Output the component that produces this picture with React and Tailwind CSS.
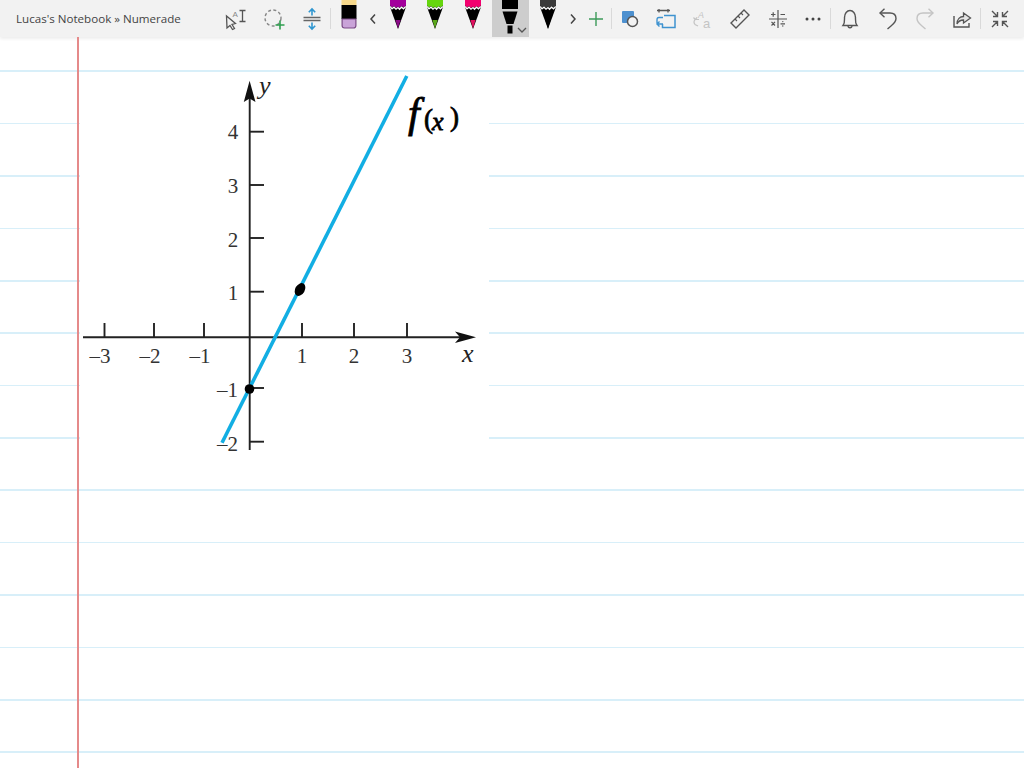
import React from 'react';

const gray = '#555';

function Svg({ w = 24, h = 24, children, className = '' }) {
  return (
    <svg width={w} height={h} viewBox={`0 0 ${w} ${h}`} fill="none" className={className}>
      {children}
    </svg>
  );
}

function Pen({ body = '#000', color }) {
  // 20x30 with the top cut off by the window edge
  return (
    <Svg w={20} h={30}>
      <path d="M2 0H18V7L10 29L2 7Z" fill="#000" />
      <path d="M2 0H18V5.5L15.5 7.5L13.5 6L11.5 8L10 6.5L8 8L6 6L4 7.5L2 5.5Z" fill={body} />
      <path d="M2.2 6.5L4 8.8L6 7.2L8 9.2L10 7.6L11.5 9.2L13.5 7.2L15.5 8.8L17.8 6.5" stroke="#fff" strokeWidth="1.3" />
      <path d="M7.4 20H12.6L10 28.5Z" fill={color} />
    </Svg>
  );
}

function Eraser() {
  return (
    <Svg w={18} h={30}>
      <rect x="1.5" y="0" width="15" height="5" fill="#f7d98c" />
      <rect x="1.5" y="5" width="15" height="14" fill="#000" />
      <path d="M2.1 19H15.9V25.5Q15.9 28 13.4 28H4.6Q2.1 28 2.1 25.5Z" fill="#c9a3d8" stroke="#7a4a86" strokeWidth="1.2" />
    </Svg>
  );
}

function ActivePen() {
  return (
    <div className="flex h-full w-full items-start justify-center bg-[#cdcdcd] relative">
      <Svg w={20} h={34}>
        <path d="M2 0H18V9H2Z" fill="#000" />
        <path d="M2.5 11.5H17.5L13.5 24H6.5Z" fill="#000" />
        <rect x="7.5" y="25.5" width="5" height="8" fill="#000" />
      </Svg>
      <span className="absolute right-[2px] bottom-[3px]">
        <Svg w={10} h={8}>
          <path d="M1 2L5 6L9 2" stroke="#555" strokeWidth="1.3" />
        </Svg>
      </span>
    </div>
  );
}

const chevron = (d) => (
  <Svg w={10} h={14}>
    <path d={d} stroke="#444" strokeWidth="1.5" />
  </Svg>
);

const tools = [
  {
    w: 'w-[38px]',
    el: (
      <Svg w={24} h={24}>
        <path d="M2.5 9L3 21L6 18.5L8.5 22.5L10.5 21.5L8 17.5L11.5 16.5Z" fill="#f2f2f2" stroke={gray} strokeWidth="1.3" />
        <text x="8.5" y="10" fontSize="8" fill="#888" fontFamily="Liberation Sans, sans-serif">A</text>
        <path d="M15.5 3.5H21.5M15.5 14.5H21.5M18.5 3.5V14.5" stroke={gray} strokeWidth="1.3" />
      </Svg>
    ),
  },
  {
    w: 'w-[38px]',
    el: (
      <Svg w={24} h={24}>
        <circle cx="11" cy="11" r="8" stroke="#888" strokeWidth="1.4" strokeDasharray="3 2.4" />
        <path d="M18 13.5V22.5M13.5 18H22.5" stroke="#2e9e4f" strokeWidth="1.6" />
      </Svg>
    ),
  },
  {
    w: 'w-[37px]',
    el: (
      <Svg w={20} h={24}>
        <path d="M1.5 10.5H18.5M1.5 13.5H18.5" stroke="#666" strokeWidth="1.3" />
        <path d="M10 2V8.5M6.8 5.2L10 2L13.2 5.2M10 15.5V22M6.8 18.8L10 22L13.2 18.8" stroke="#2f96d0" strokeWidth="1.6" />
      </Svg>
    ),
  },
  { sep: true },
  { w: 'w-[36px]', el: <Eraser />, top: true },
  { w: 'w-[12px]', el: chevron('M7 2.5L3 7L7 11.5') },
  { w: 'w-[37.5px]', el: <Pen body="#a3009c" color="#8a0a86" />, top: true },
  { w: 'w-[37.5px]', el: <Pen body="#66d60e" color="#5aa81a" />, top: true },
  { w: 'w-[37.5px]', el: <Pen body="#f2006f" color="#e0115f" />, top: true },
  { w: 'w-[37.5px]', el: <ActivePen />, top: true },
  { w: 'w-[37.5px]', el: <Pen body="#3a3a3a" color="#000" />, top: true },
  { w: 'w-[13.5px]', el: chevron('M3 2.5L7 7L3 11.5') },
  {
    w: 'w-[31px]',
    el: (
      <Svg w={16} h={16}>
        <path d="M8 1V15M1 8H15" stroke="#3d9b5a" strokeWidth="1.4" />
      </Svg>
    ),
  },
  { sep: true },
  {
    w: 'w-[36px]',
    el: (
      <Svg w={20} h={20}>
        <rect x="2" y="2" width="12" height="12" rx="1" fill="#4d90cf" />
        <circle cx="12.5" cy="12.5" r="5" fill="#f3f3f3" stroke="#555" strokeWidth="1.5" />
      </Svg>
    ),
  },
  {
    w: 'w-[36px]',
    el: (
      <Svg w={22} h={22}>
        <path d="M2 2.5H15M4 1V4.5M13 1V4.5" stroke="#555" strokeWidth="1.3" />
        <path d="M9 7.5H20V19.5H7.5V16" stroke="#3f93d0" strokeWidth="1.5" />
        <path d="M8 9.5H4Q2 9.5 2 12V14.5Q2 16 4 16H8M4.5 13.5L2 16L4.5 18.5" stroke="#3f93d0" strokeWidth="1.4" />
      </Svg>
    ),
  },
  {
    w: 'w-[37px]',
    el: (
      <Svg w={22} h={22}>
        <text x="6" y="10" fontSize="9" fontStyle="italic" fill="#c4c4c4" fontFamily="Liberation Sans, sans-serif">A</text>
        <text x="11" y="20" fontSize="13" fill="#c4c4c4" fontFamily="Liberation Sans, sans-serif">a</text>
        <path d="M7 11.5L3 11.5Q1 14 3 16.5L6 18M1.5 9.5L3.2 11.5L5 9.5" stroke="#c4c4c4" strokeWidth="1.2" />
      </Svg>
    ),
  },
  {
    w: 'w-[38px]',
    el: (
      <Svg w={22} h={22}>
        <path d="M2 15L15 2L20 7L7 20Z" stroke="#555" strokeWidth="1.4" />
        <path d="M6 11L8 13M9 8L11 10M12 5L14 7" stroke="#555" strokeWidth="1.1" />
      </Svg>
    ),
  },
  {
    w: 'w-[37px]',
    el: (
      <Svg w={20} h={20}>
        <path d="M10 1V19M1 10H19" stroke="#555" strokeWidth="1.2" />
        <path d="M3 5.5H7.5M5.2 3.2V7.8M12.5 5.5H17M3.5 12.8L7 16.5M7 12.8L3.5 16.5M12.5 14.8H17" stroke="#555" strokeWidth="1.2" />
        <circle cx="14.8" cy="12.6" r=".7" fill="#555" />
        <circle cx="14.8" cy="17" r=".7" fill="#555" />
      </Svg>
    ),
  },
  {
    w: 'w-[34px]',
    el: (
      <Svg w={18} h={6}>
        <circle cx="3" cy="3" r="1.5" fill="#444" />
        <circle cx="9" cy="3" r="1.5" fill="#444" />
        <circle cx="15" cy="3" r="1.5" fill="#444" />
      </Svg>
    ),
  },
  { sep: true },
  {
    w: 'w-[38px]',
    el: (
      <Svg w={20} h={22}>
        <path d="M3 17.5C5 15 4.5 12 4.5 9.5C4.5 5.5 7 2.5 10 2.5C13 2.5 15.5 5.5 15.5 9.5C15.5 12 15 15 17 17.5Z" stroke="#555" strokeWidth="1.4" />
        <path d="M8 17.5C8 20.5 12 20.5 12 17.5" stroke="#555" strokeWidth="1.3" />
      </Svg>
    ),
  },
  {
    w: 'w-[37px]',
    el: (
      <Svg w={20} h={22}>
        <path d="M2 5H12C16 5 18 7.5 18 10.5C18 13.5 15.5 16 13 18L9.5 21" stroke="#555" strokeWidth="1.4" />
        <path d="M6.5 0.8L2 5L6.5 9.2" stroke="#555" strokeWidth="1.4" />
      </Svg>
    ),
  },
  {
    w: 'w-[37px]',
    el: (
      <Svg w={20} h={22}>
        <path d="M18 5H8C4 5 2 7.5 2 10.5C2 13.5 4.5 16 7 18L10.5 21" stroke="#c4c4c4" strokeWidth="1.4" />
        <path d="M13.5 0.8L18 5L13.5 9.2" stroke="#c4c4c4" strokeWidth="1.4" />
      </Svg>
    ),
  },
  {
    w: 'w-[37px]',
    el: (
      <Svg w={20} h={22}>
        <path d="M2 8V19H17V15" stroke="#555" strokeWidth="1.4" />
        <path d="M5 16C5 11 8 8.5 11.5 8.5V5L18.5 10L11.5 15V12C9 12 6.5 13 5 16Z" fill="#e4e4e4" stroke="#555" strokeWidth="1.3" />
      </Svg>
    ),
  },
  { sep: true },
  {
    w: 'w-[38px]',
    el: (
      <Svg w={18} h={18}>
        <path d="M1 1L6.5 6.5M6.5 2V6.5H2M17 1L11.5 6.5M11.5 2V6.5H16M1 17L6.5 11.5M6.5 16V11.5H2M17 17L11.5 11.5M11.5 16V11.5H16" stroke="#555" strokeWidth="1.4" />
      </Svg>
    ),
  },
];

function Toolbar() {
  return (
    <div className="flex h-[37px] shrink-0 items-stretch bg-[#f2f2f2] shadow-[0_2px_3px_rgba(0,0,0,0.07)] relative">
      <div className="w-[217px] flex items-center pl-4 text-[11.6px] text-[#444] font-['Open_Sans',sans-serif] whitespace-nowrap">
        Lucas's Notebook » Numerade
      </div>
      {tools.map((t, i) =>
        t.sep ? (
          <div key={i} className="w-px my-[8px] bg-[#d9d9d9]" />
        ) : (
          <div key={i} className={`${t.w} flex justify-center ${t.top ? 'items-start' : 'items-center'}`}>
            {t.el}
          </div>
        )
      )}
    </div>
  );
}

const ticksX = [104.5, 154, 204, 302, 354, 407];
const ticksY = [131.7, 185, 238, 291.7, 388, 441.7];

const labels = [
  ['4', 233, 139],
  ['3', 233, 193],
  ['2', 233, 246.5],
  ['1', 233, 300],
  ['–1', 227.5, 397],
  ['–2', 227.5, 451],
  ['–3', 100, 363],
  ['–2', 150, 363],
  ['–1', 200, 363],
  ['1', 302, 363],
  ['2', 354, 363],
  ['3', 407, 363],
];

function Graph() {
  const serif = { fontFamily: '"Liberation Serif", serif' };
  return (
    <svg width="409" height="400" viewBox="80 72 409 400" className="block">
      <g stroke="#222" strokeWidth="1.9">
        <path d="M249.7 95V450M83 337.3H460" />
        {ticksX.map((x) => <path key={x} d={`M${x} 323V337`} />)}
        {ticksY.map((y) => <path key={y} d={`M250 ${y}H264`} />)}
      </g>
      <path d="M249.6 80.7L255.5 102L249.6 98.5L243.8 102Z" fill="#111" />
      <path d="M476 337.3L455 331.5L460 337.3L455 343Z" fill="#111" />
      <g style={serif} fontSize="21" fill="#333" textAnchor="middle">
        {labels.map(([t, x, y]) => (
          <text key={t + x} x={x} y={y}>{t}</text>
        ))}
      </g>
      <text x="462" y="362" style={serif} fontSize="26" fontStyle="italic" fill="#222">x</text>
      <text x="259" y="94" style={serif} fontSize="26" fontStyle="italic" fill="#222">y</text>
      <path d="M222 442.7L406.8 76" stroke="#12aee3" strokeWidth="3.6" />
      <ellipse cx="300" cy="289.5" rx="4.8" ry="6.8" transform="rotate(30 300 289.5)" fill="#000" />
      <circle cx="249.5" cy="389" r="4.8" fill="#000" />
      <g style={serif} fill="#000" stroke="#000" strokeWidth=".8">
        <text x="408" y="127" fontSize="42" fontStyle="italic">f</text>
        <text x="424" y="128" fontSize="27">(</text>
        <text x="432" y="130" fontSize="26" fontStyle="italic">x</text>
        <text x="450" y="126" fontSize="27">)</text>
      </g>
    </svg>
  );
}

export default function App() {
  return (
    <div className="h-[768px] w-[1024px] overflow-hidden flex flex-col bg-white">
      <Toolbar />
      <div className="flex-1 flex relative bg-[repeating-linear-gradient(to_bottom,transparent_0,transparent_33.4px,#d8eff9_33.4px,#d8eff9_35px,transparent_35px,transparent_52.38px)]">
        <div className="w-[77px] shrink-0 border-r-[2px] border-[#e58a8a] box-content" />
        <div className="pl-px pt-[35px]">
          <div className="bg-white">
            <Graph />
          </div>
        </div>
      </div>
    </div>
  );
}
